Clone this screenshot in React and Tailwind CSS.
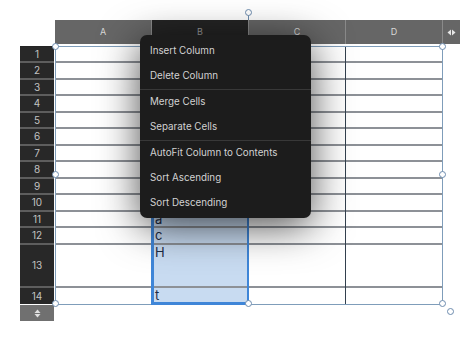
import React from "react";

const rows = [
  { n: "1", h: "h-[16px]" },
  { n: "2", h: "h-[17px]" },
  { n: "3", h: "h-[16px]" },
  { n: "4", h: "h-[17px]" },
  { n: "5", h: "h-[16px]" },
  { n: "6", h: "h-[17px]" },
  { n: "7", h: "h-[16px]" },
  { n: "8", h: "h-[17px]" },
  { n: "9", h: "h-[16px]" },
  { n: "10", h: "h-[17px]" },
  { n: "11", h: "h-[16px]" },
  { n: "12", h: "h-[17px]" },
  { n: "13", h: "h-[43px]" },
  { n: "14", h: "h-[16px]" },
];

const bText = { "11": "a", "12": "c", "13": "H", "14": "t" };

function Column({ width, sel, divider }) {
  return (
    <div className={`relative flex flex-col ${width} ${divider} ${sel ? "bg-[#c8dbf1]" : "bg-white"}`}>
      {rows.map((r, i) => (
        <div
          key={r.n}
          className={`${r.h} ${i < rows.length - 1 ? "border-b-2 border-[#8d9197]" : ""} pl-[3px] text-[13px] leading-[15px] text-[#1d2b44]`}
        >
          {sel ? bText[r.n] || "" : ""}
        </div>
      ))}
      {sel && (
        <div className="pointer-events-none absolute -left-[1px] -right-[2px] top-0 -bottom-[1px] border-[3px] border-[#3f86d8]" />
      )}
    </div>
  );
}

function Handle({ cls }) {
  return (
    <div className={`absolute h-[7px] w-[7px] rounded-full border border-[#6d8cae] bg-white ${cls}`} />
  );
}

const groups = [
  ["Insert Column", "Delete Column"],
  ["Merge Cells", "Separate Cells"],
  ["AutoFit Column to Contents", "Sort Ascending", "Sort Descending"],
];

export default function App() {
  return (
    <div
      className="relative h-[338px] w-[474px] overflow-hidden bg-white"
      style={{ fontFamily: "Inter, 'Liberation Sans', sans-serif" }}
    >
      <div className="pl-[20px] pt-[20px]">
        {/* column headers */}
        <div className="flex h-[24px] text-[9px] leading-[24px]">
          <div className="w-[35px]" />
          <div className="w-[97px] border-r border-[#8a8a8a] bg-[#666666] text-center text-[#d8d8d8]">A</div>
          <div className="w-[97px] border-r border-[#8a8a8a] bg-[#242424] text-center text-[#9a9a9a]">B</div>
          <div className="w-[97px] border-r border-[#8a8a8a] bg-[#666666] text-center text-[#d8d8d8]">C</div>
          <div className="w-[97px] border-r border-[#8a8a8a] bg-[#666666] text-center text-[#d8d8d8]">D</div>
          <div className="flex w-[17px] items-center justify-center bg-[#666666]">
            <svg width="9" height="7" viewBox="0 0 9 7">
              <path d="M4 0.5 L0.5 3.5 L4 6.5 Z" fill="#e6e6e6" />
              <path d="M5 0.5 L8.5 3.5 L5 6.5 Z" fill="#e6e6e6" />
            </svg>
          </div>
        </div>

        {/* body */}
        <div className="mt-[2px] flex">
          <div className="flex w-[34px] flex-col">
            <div className="flex flex-col border-t border-[#242424]">
              {rows.map((r, i) => (
                <div
                  key={r.n}
                  className={`${r.h} flex items-center justify-center bg-[#282828] text-[10px] text-[#c2c2c2] ${i < rows.length - 1 ? "border-b-2 border-[#5e5e5e]" : ""}`}
                >
                  {r.n}
                </div>
              ))}
            </div>
            <div className="mt-[1px] flex h-[16px] items-center justify-center bg-[#707070]">
              <svg width="7" height="9" viewBox="0 0 7 9">
                <path d="M0.5 4 L3.5 0.5 L6.5 4 Z" fill="#e0e0e0" />
                <path d="M0.5 5 L3.5 8.5 L6.5 5 Z" fill="#e0e0e0" />
              </svg>
            </div>
          </div>

          <div className="ml-[1px] flex self-start border border-[#7f9dba]">
            <Column width="w-[96px]" divider="border-r border-[#33404e]" />
            <Column width="w-[97px]" sel divider="border-r border-[#33404e]" />
            <Column width="w-[97px]" divider="border-r border-[#33404e]" />
            <Column width="w-[96px]" divider="" />
          </div>
        </div>
      </div>

      {/* handles */}
      <div className="absolute left-[248px] top-[15px] h-[5px] w-px bg-[#6d8cae]" />
      <Handle cls="left-[245px] top-[9px]" />
      <Handle cls="left-[52px] top-[43px]" />
      <Handle cls="left-[439px] top-[43px]" />
      <Handle cls="left-[52px] top-[171px]" />
      <Handle cls="left-[439px] top-[171px]" />
      <Handle cls="left-[52px] top-[300px]" />
      <Handle cls="left-[439px] top-[300px]" />
      <Handle cls="left-[447px] top-[308px]" />
      <Handle cls="left-[245px] top-[300px]" />

      {/* context menu */}
      <div className="absolute left-[140px] top-[35px] w-[171px] rounded-[7px] bg-[#1c1c1c] pb-[2px] pt-[4px] shadow-[0_8px_40px_rgba(0,0,0,0.7)]">
        {groups.map((g, gi) => (
          <div key={gi} className={gi > 0 ? "border-t border-[#383838]" : ""}>
            {g.map((t) => (
              <div key={t} className="flex h-[25px] items-center pl-[10px] text-[9.8px] text-[#d2d2d2]">
                {t}
              </div>
            ))}
          </div>
        ))}
      </div>
    </div>
  );
}
